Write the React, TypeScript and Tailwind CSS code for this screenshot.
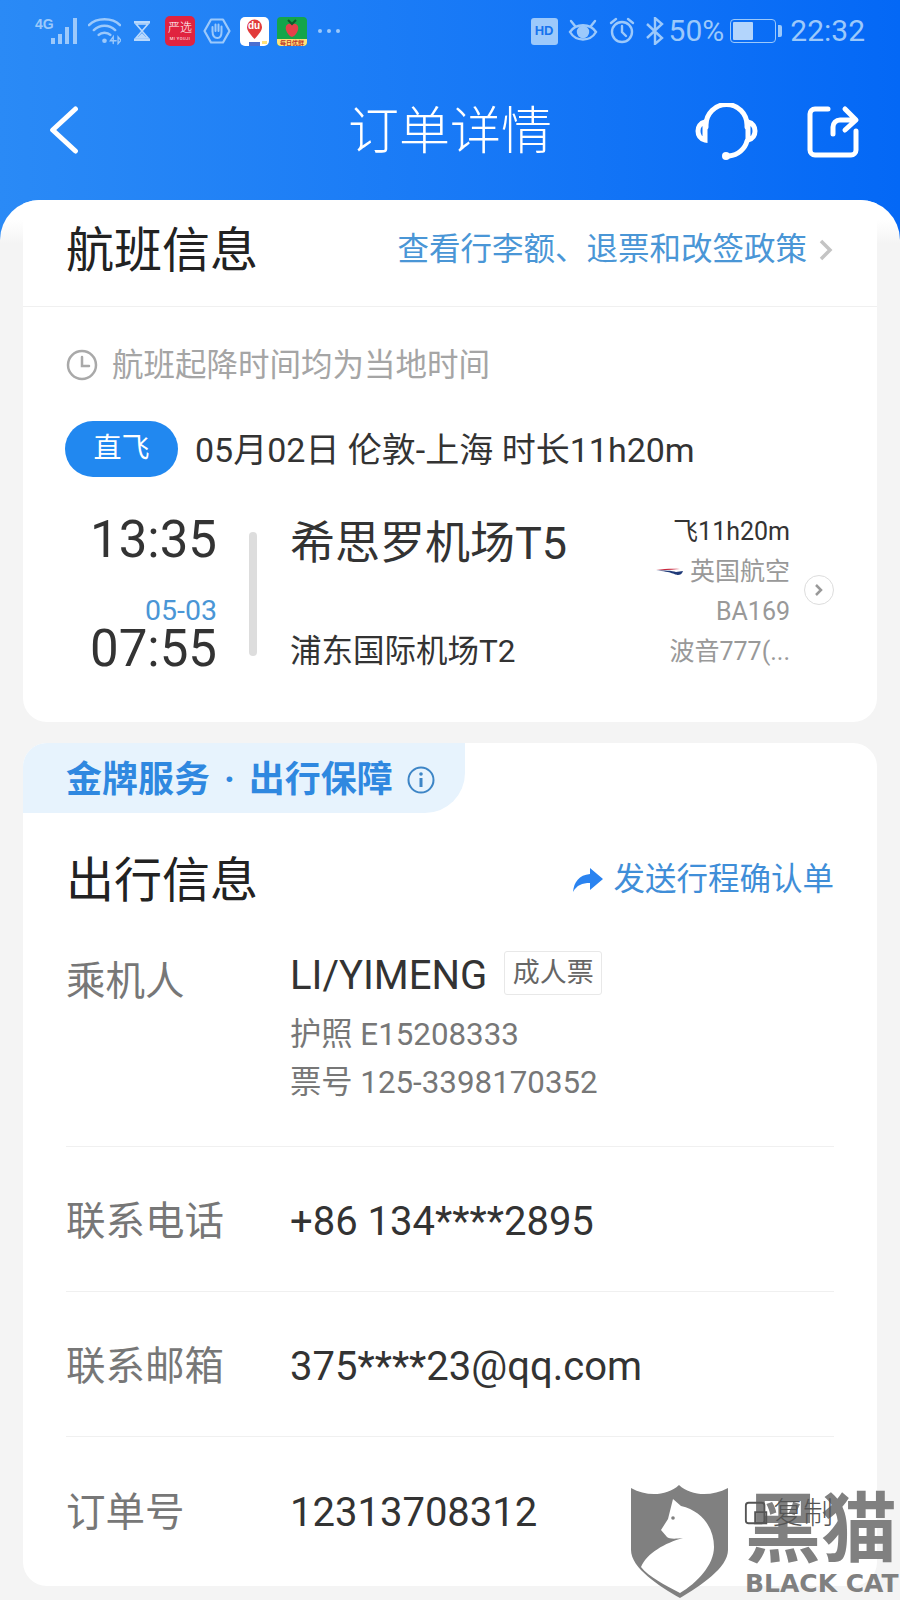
const sans = "font-['Roboto','Noto_Sans_CJK_SC',sans-serif]"

function Signal() {
  return (
    <div className="relative h-[30px] w-[46px] text-[#9cc9fb]">
      <span className="absolute left-0 top-[-2px] font-['Liberation_Sans',sans-serif] text-[14px] font-bold leading-[20px]">4G</span>
      <svg width="46" height="30" viewBox="0 0 46 30" className="absolute left-0 top-0" fill="currentColor">
        <rect x="16" y="22" width="4" height="6" />
        <rect x="23" y="18" width="4" height="10" />
        <rect x="30" y="11" width="4" height="17" />
        <rect x="38" y="2" width="4" height="26" />
      </svg>
    </div>
  )
}

function Wifi() {
  return (
    <svg width="33" height="28" viewBox="0 0 34 28" fill="none" stroke="#9cc9fb" strokeWidth="2.6" strokeLinecap="round">
      <path d="M1 8 C9 0 25 0 33 8" />
      <path d="M6 13 C12 7 22 7 28 13" />
      <path d="M11 18 C14 15 20 15 23 18" />
      <circle cx="17" cy="24" r="2.4" fill="#9cc9fb" stroke="none" />
      <path d="M26 27V20l-3 4h6M31 20l3 3.5-3 3.5z" strokeWidth="1.4" />
    </svg>
  )
}

function Hourglass() {
  return (
    <svg width="16" height="20" viewBox="0 0 16 20" fill="#b9d9fc">
      <rect x="0" y="0" width="16" height="2.4" />
      <rect x="0" y="17.6" width="16" height="2.4" />
      <path d="M2 3h12L8 10l6 7H2l6-7z" fill="none" stroke="#b9d9fc" strokeWidth="1.6" />
      <path d="M8 12l5 5H3z" />
    </svg>
  )
}

function AppIcons() {
  return (
    <>
      <div className="ml-[15px] flex h-[30px] w-[30px] flex-col items-center justify-center rounded-[5px] bg-[#e0233f] text-white">
        <span className="text-[12px] font-light leading-[14px]">严选</span>
        <span className="mt-[1px] text-[4px] leading-[5px] tracking-[0.5px]">MI YOUJI</span>
      </div>
      <svg width="28" height="26" viewBox="0 0 28 26" fill="none" className="ml-[8px]">
        <path d="M8 1.5h12L26.5 13 20 24.5H8L1.5 13z" stroke="#9cc9fb" strokeWidth="2.2" strokeLinejoin="round" />
        <path d="M9.5 14V9M12.5 13V6.5M15.5 13V6.5M18.5 14V8.5M9.5 13c0 5 2 7 5 7s4-2 4-6" stroke="#9cc9fb" strokeWidth="2" strokeLinecap="round" />
      </svg>
      <div className="relative ml-[9px] h-[29px] w-[29px] overflow-hidden rounded-[5px] bg-white">
        <svg width="29" height="29" viewBox="0 0 29 29">
          <path d="M14.5 22C9 16 7 13 7 10a7.5 7.5 0 0 1 15 0c0 3-2 6-7.500 12z" fill="#e23b3b" />
          <rect x="9" y="25" width="11" height="4" fill="#4a6fd0" />
          <rect x="22" y="24" width="5" height="3" fill="#ffe27a" />
        </svg>
        <span className="absolute left-[8px] top-[3px] font-['Liberation_Sans',sans-serif] text-[10px] font-bold leading-[12px] text-white">du</span>
      </div>
      <div className="ml-[8px] flex h-[29px] w-[30px] flex-col overflow-hidden rounded-[4px] bg-[#14a54a]">
        <svg width="30" height="22" viewBox="0 0 30 22">
          <path d="M15 7c5-1 7 2 6 6-1 3-3 6-6 7-3-1-5-4-6-7-1-4 1-7 6-6z" fill="#e6404a" />
          <path d="M11 3l4 4 4-4" stroke="#0d5c2b" strokeWidth="2" fill="none" />
        </svg>
        <div className="flex h-[7px] items-center justify-center bg-[#ffe27a] text-[6px] font-bold leading-[7px] text-[#c0392b]">每日优鲜</div>
      </div>
      <div className="ml-[11px] flex gap-[5px]">
        <div className="h-[4px] w-[4px] rounded-full bg-[#9cc9fb]" />
        <div className="h-[4px] w-[4px] rounded-full bg-[#9cc9fb]" />
        <div className="h-[4px] w-[4px] rounded-full bg-[#9cc9fb]" />
      </div>
    </>
  )
}

function StatusRight() {
  return (
    <div className="flex items-center text-[#9cc9fb]">
      <div className="flex h-[27px] w-[27px] items-center justify-center rounded-[3px] bg-[#9cc9fb] font-['Liberation_Sans',sans-serif] text-[13px] font-bold text-[#1673ee]">HD</div>
      <svg width="30" height="26" viewBox="0 0 30 26" fill="none" stroke="currentColor" strokeWidth="2.4" strokeLinecap="round" className="ml-[10px]">
        <path d="M2 14c6-9 20-9 26 0-6 10-20 10-26 0z" />
        <circle cx="15" cy="14" r="5" fill="currentColor" />
        <path d="M3 3l4 5M27 3l-4 5" />
      </svg>
      <svg width="26" height="28" viewBox="0 0 26 28" fill="none" stroke="currentColor" strokeWidth="2.4" strokeLinecap="round" className="ml-[11px]">
        <circle cx="13" cy="15" r="10" />
        <path d="M13 9v6l4 4M2 6l5-4M24 6l-5-4" />
      </svg>
      <svg width="20" height="28" viewBox="0 0 20 28" fill="none" stroke="currentColor" strokeWidth="2.4" className="ml-[10px]">
        <path d="M2 7l15 14-7 6V1l7 6L2 21" />
      </svg>
      <span className="ml-[4px] text-[30px] leading-[34px]">50%</span>
      <div className="ml-[6px] flex h-[24px] w-[46px] items-center rounded-[4px] border border-[#9cc9fb] p-[2px]">
        <div className="h-full w-[20px] rounded-[1px] bg-[#b3d5fc]" />
      </div>
      <div className="ml-[2px] h-[12px] w-[4px] rounded-r-[2px] bg-[#9cc9fb]" />
      <span className="ml-[8px] text-[30px] leading-[34px]">22:32</span>
    </div>
  )
}

function InfoRow({ label, value }: { label: string; value: string }) {
  return (
    <div className="flex h-[145px] items-center border-b border-[#f0f0f0] pt-[6px]">
      <div className="w-[224px] text-[39.500px] leading-[48px] text-[#777]">{label}</div>
      <div className="text-[40px] leading-[46px] text-[#333]">{value}</div>
    </div>
  )
}

function Watermark() {
  return (
    <div className="absolute bottom-[2px] left-[631px] flex text-[#808080]">
      <svg width="98" height="113" viewBox="0 0 98 113">
        <path d="M0 3c16 9 36 8 48-3 12 11 32 12 49 3v62c0 18-28 36-48 48C28 101 0 83 0 65z" fill="#808080" />
        <path d="M42 14L50 21C72 26 83 44 83 62C83 80 66 98 49 108C34 100 18 92 10 82C16 68 34 58 52 53C44 54 38 54 36 52L30 45L37 34z" fill="#fff" />
        <circle cx="42" cy="33" r="1.800" fill="#808080" />
      </svg>
      <div className="ml-[16px] flex w-[154px] flex-col">
        <span className="mt-[9px] h-[72px] text-[76px] font-bold leading-[72px]">黑猫</span>
        <span className="mt-[5px] whitespace-nowrap font-['DejaVu_Sans',sans-serif] text-[25px] font-bold leading-[26px]">BLACK CAT</span>
      </div>
    </div>
  )
}

export default function App() {
  return (
    <div className={`relative h-[1600px] w-[900px] overflow-hidden bg-[#f4f4f4] ${sans}`}>
      <div className="h-[240px] bg-gradient-to-r from-[#2a8af6] to-[#0468f6] px-[35px] pt-[16px]">
        <div className="flex h-[30px] items-center justify-between">
          <div className="flex items-center">
            <Signal />
            <div className="ml-[7px]"><Wifi /></div>
            <div className="ml-[13px]"><Hourglass /></div>
            <AppIcons />
          </div>
          <StatusRight />
        </div>
        <div className="relative mt-[55px] flex h-[62px] items-center justify-center">
          <svg width="31" height="48" viewBox="0 0 34 52" fill="none" stroke="#fff" strokeWidth="5.500" strokeLinecap="round" strokeLinejoin="round" className="absolute left-[14px] top-[5px]">
            <path d="M29 3L4 26l25 23" />
          </svg>
          <span className="text-[51px] font-light leading-[62px] text-white">订单详情</span>
          <svg width="64" height="58" viewBox="0 0 64 58" fill="none" stroke="#fff" strokeWidth="5" strokeLinecap="round" className="absolute left-[660px]">
            <path d="M11 24V22a20.500 20.500 0 0 1 41 0V24" />
            <path d="M10 19c-5 1-7 5-7 9s2 8 7 9z" />
            <path d="M53 19c5 1 7 5 7 9s-2 8-7 9z" />
            <path d="M52 38c-2 8-9 14-18 15" />
            <circle cx="31" cy="53" r="4" fill="#fff" stroke="none" />
          </svg>
          <svg width="54" height="54" viewBox="0 0 54 54" fill="none" stroke="#fff" strokeWidth="5" strokeLinecap="round" strokeLinejoin="round" className="absolute left-[771px]">
            <path d="M22 4H9a5 5 0 0 0-5 5v36a5 5 0 0 0 5 5h36a5 5 0 0 0 5-5V26" />
            <path d="M27 29v-7a7 7 0 0 1 7-7h15M39 4l11 11-11 10" />
          </svg>
        </div>
      </div>

      <div className="relative mt-[-40px] overflow-hidden rounded-t-[40px] bg-[linear-gradient(#fff,#fff_20px,#f4f4f4_44px)] px-[23px] pb-[14px]">
        <div className="h-[522px] rounded-b-[24px] bg-white">
          <div className="flex h-[107px] items-center justify-between border-b border-[#f0f0f0] pl-[43px] pr-[44px]">
            <span className="pb-[5px] text-[48px] leading-[60px] text-[#222]">航班信息</span>
            <span className="flex items-center pb-[7px] text-[31.500px] leading-[40px] text-[#4a96d6]">
              查看行李额、退票和改签政策
              <svg width="14" height="22" viewBox="0 0 14 22" fill="none" stroke="#c4c4c4" strokeWidth="3.500" className="ml-[12px]">
                <path d="M2 2l9 9-9 9" />
              </svg>
            </span>
          </div>
          <div className="flex items-center pl-[43px] pt-[43px]">
            <svg width="32" height="32" viewBox="0 0 32 32" fill="none" stroke="#a9a9a9" strokeWidth="2.500" strokeLinecap="round" className="mt-[-3px]">
              <circle cx="16" cy="16" r="14" />
              <path d="M16 8v9h7" />
            </svg>
            <span className="ml-[14px] text-[31.500px] leading-[32px] text-[#a5a5a5]">航班起降时间均为当地时间</span>
          </div>
          <div className="mt-[39px] flex items-center pl-[42px]">
            <div className="flex h-[56px] w-[113px] items-center justify-center rounded-full bg-[#2188f0] text-[28px] text-white">直飞</div>
            <span className="ml-[17px] mt-[2px] text-[34px] leading-[40px] text-[#333]">05月02日 伦敦-上海 时长11h20m</span>
          </div>
          <div className="mt-[27px] flex pl-[43px]">
            <div className="flex w-[151px] flex-col items-end">
              <span className="mt-[8px] text-[51px] leading-[56px] text-[#333]">13:35</span>
              <span className="mt-[28px] text-[28.500px] leading-[30px] text-[#4a96d6]">05-03</span>
              <span className="mt-[-5px] text-[51px] leading-[56px] text-[#333]">07:55</span>
            </div>
            <div className="ml-[32px] mt-[28px] h-[124px] w-[8px] rounded-full bg-[#dddddd]" />
            <div className="ml-[33px] flex w-[342px] flex-col">
              <span className="mt-[11px] text-[45px] leading-[58px] text-[#333]">希思罗机场T5</span>
              <span className="mt-[59px] text-[31.500px] leading-[40px] text-[#333]">浦东国际机场T2</span>
            </div>
            <div className="flex w-[158px] flex-col items-end pt-[8px] text-[25px] leading-[40px] text-[#999]">
              <span className="text-[#333]">飞11h20m</span>
              <span className="flex items-center">
                <svg width="28" height="8" viewBox="0 0 28 8" className="mr-[6px]">
                  <path d="M0 2c10-1.500 18-1.500 24-1-6 .5-14 1.500-24 1z" fill="#c8283e" />
                  <path d="M0 2.500c8 0 16 0 20 1.500l7-1c-1 3-3 4-5 4-3 0-6-3.500-22-4.500z" fill="#1f3a78" />
                </svg>
                英国航空
              </span>
              <span>BA169</span>
              <span>波音777(...</span>
            </div>
            <div className="ml-[14px] mt-[71px] flex h-[30px] w-[30px] items-center justify-center rounded-full border border-[#dddddd]">
              <svg width="10" height="14" viewBox="0 0 10 14" fill="none" stroke="#999" strokeWidth="2.500"><path d="M2 2l5 5-5 5" /></svg>
            </div>
          </div>
        </div>

        <div className="mt-[21px] h-[843px] rounded-[24px] bg-white">
          <div className="flex h-[70px] w-[442px] items-center rounded-tl-[24px] rounded-br-[40px] bg-[#e7f3fd] pl-[43px] pt-[4px]">
            <span className="text-[36px] font-bold leading-[44px] text-[#2f88e0] [word-spacing:5px]">金牌服务 · 出行保障</span>
            <svg width="28" height="28" viewBox="0 0 28 28" fill="none" stroke="#3d85c6" strokeWidth="2" className="ml-[14px]">
              <circle cx="14" cy="14" r="12.500" />
              <path d="M14 12v9" strokeWidth="3" />
              <circle cx="14" cy="8" r="1.800" fill="#3d85c6" stroke="none" />
            </svg>
          </div>
          <div className="px-[43px]">
            <div className="mt-[38px] flex h-[60px] items-center justify-between">
              <span className="text-[48px] leading-[60px] text-[#222]">出行信息</span>
              <span className="flex items-center pb-[2px] text-[31.500px] leading-[40px] text-[#3f8ed8]">
                <svg width="32" height="26" viewBox="0 0 32 26" fill="#2a83f0" className="mr-[9px]">
                  <path d="M18 1l13 11-13 11v-7C10 16 5 18 1 25c1-10 6-17 17-18z" />
                </svg>
                发送行程确认单
              </span>
            </div>
            <div className="flex h-[236px] items-start border-b border-[#f0f0f0] pt-[42px]">
              <div className="mt-[5px] w-[224px] text-[39.500px] leading-[48px] text-[#777]">乘机人</div>
              <div className="flex flex-col">
                <div className="flex items-start">
                  <span className="text-[40px] leading-[46px] text-[#333]">LI/YIMENG</span>
                  <span className="ml-[17px] mt-[-2px] flex h-[44px] w-[98px] items-center justify-center rounded-[3px] border border-[#e8e8e8] text-[27px] text-[#666]">成人票</span>
                </div>
                <span className="mt-[16px] text-[31.300px] leading-[40px] text-[#777]">护照 E15208333</span>
                <span className="mt-[8px] text-[31.300px] leading-[40px] text-[#777]">票号 125-3398170352</span>
              </div>
            </div>
            <InfoRow label="联系电话" value="+86 134****2895" />
            <InfoRow label="联系邮箱" value="375****23@qq.com" />
            <div className="flex h-[145px] items-center pt-[6px]">
              <div className="w-[224px] text-[39.500px] leading-[48px] text-[#777]">订单号</div>
              <div className="text-[40px] leading-[46px] text-[#333]">12313708312</div>
            </div>
          </div>
        </div>
      </div>

      <Watermark />
      <div className="absolute left-[744px] top-[1497px] flex items-center text-[#555]">
        <svg width="26" height="30" viewBox="0 0 28 30" fill="none" stroke="#555" strokeWidth="2">
          <rect x="2" y="4" width="20" height="22" rx="3" />
          <path d="M12 14h12v12H12z" />
        </svg>
        <span className="ml-[3px] text-[30px] font-light leading-[32px]">复制</span>
      </div>
    </div>
  )
}
